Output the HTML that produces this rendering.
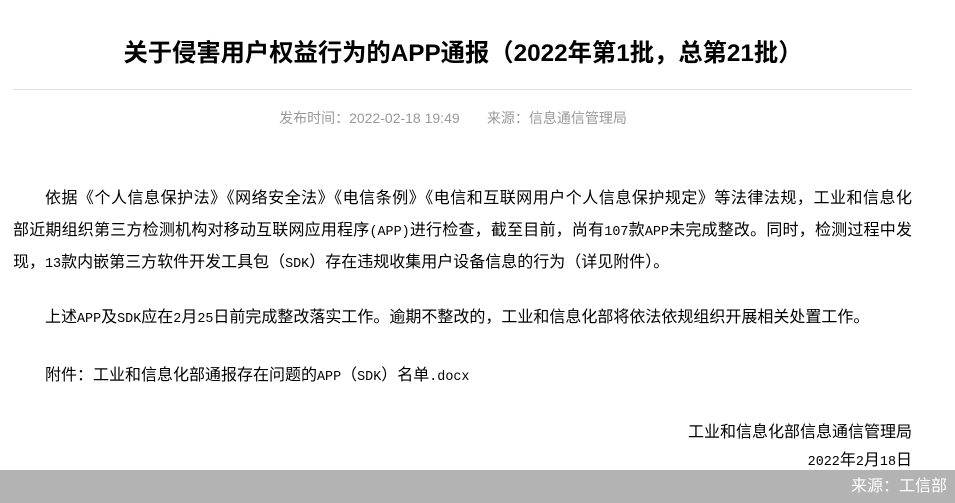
<!DOCTYPE html>
<html><head><meta charset="utf-8"><style>
body{margin:0;width:955px;height:503px;overflow:hidden;background:#fff;position:relative;font-family:"Liberation Sans","Noto Sans CJK SC",sans-serif;}
h1{position:absolute;top:36px;left:0;width:926px;margin:0;text-align:center;font-size:24.3px;font-weight:bold;line-height:36px;color:#000;}
.hr{position:absolute;top:89px;left:13px;width:899px;height:1px;background:#ddd;}
.meta{position:absolute;top:109px;left:0;width:906px;text-align:center;font-size:14px;color:#999;line-height:18px;}
.body{position:absolute;left:13px;width:899px;font-family:"Liberation Mono","Noto Sans CJK SC",monospace;font-size:16px;color:#000;}
.a{font-size:13.4px;}
.l{position:absolute;left:0;width:899px;line-height:32px;white-space:nowrap;}
.j{text-align:justify;text-align-last:justify;}
.r{position:absolute;right:43px;font-family:"Liberation Mono","Noto Sans CJK SC",monospace;font-size:16px;line-height:28px;}
.bar{position:absolute;top:470px;left:0;width:955px;height:33px;background:#b3b3b3;color:#fff;font-size:16px;line-height:33px;text-align:right;}
.bar span{padding-right:8px;}
</style></head><body>
<h1>关于侵害用户权益行为的APP通报（2022年第1批，总第21批）</h1>
<div class="hr"></div>
<div class="meta">发布时间：2022-02-18 19:49&nbsp;&nbsp;&nbsp;&nbsp;&nbsp;&nbsp;&nbsp;来源：信息通信管理局</div>
<div class="body">
<div class="l j" style="top:183px;left:32px;width:867px">依据《个人信息保护法》《网络安全法》《电信条例》《电信和互联网用户个人信息保护规定》等法律法规，工业和信息化</div>
<div class="l j" style="top:215px">部近期组织第三方检测机构对移动互联网应用程序<span class="a">(APP)</span>进行检查，截至目前，尚有<span class="a">107</span>款<span class="a">APP</span>未完成整改。同时，检测过程中发</div>
<div class="l" style="top:247px">现，<span class="a">13</span>款内嵌第三方软件开发工具包（<span class="a">SDK</span>）存在违规收集用户设备信息的行为（详见附件）。</div>
<div class="l" style="top:302px;left:32px">上述<span class="a">APP</span>及<span class="a">SDK</span>应在<span class="a">2</span>月<span class="a">25</span>日前完成整改落实工作。逾期不整改的，工业和信息化部将依法依规组织开展相关处置工作。</div>
<div class="l" style="top:360px;left:32px">附件：工业和信息化部通报存在问题的<span class="a">APP</span>（<span class="a">SDK</span>）名单<span class="a">.docx</span></div>
</div>
<div class="r" style="top:419px">工业和信息化部信息通信管理局</div>
<div class="r" style="top:447px"><span class="a">2022</span>年<span class="a">2</span>月<span class="a">18</span>日</div>
<div class="bar"><span>来源：工信部</span></div>
</body></html>
